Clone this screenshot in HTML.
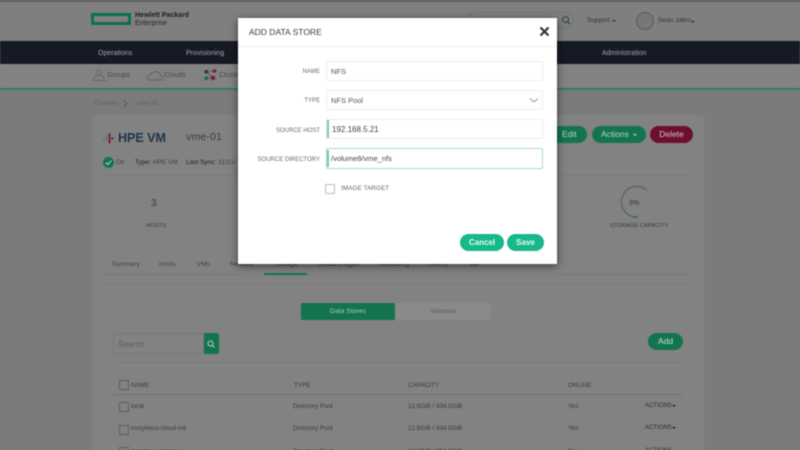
<!DOCTYPE html>
<html>
<head>
<meta charset="utf-8">
<style>
html,body{margin:0;padding:0;width:800px;height:450px;overflow:hidden;background:#7b7b7b;font-family:"Liberation Sans",sans-serif;}
.a{position:absolute;white-space:nowrap;line-height:1;}
#blur{position:absolute;left:0;top:0;width:800px;height:450px;filter:blur(.5px);overflow:hidden;}
.btn{position:absolute;border-radius:12px;color:#c9dcd3;font-size:8.5px;text-align:center;height:17px;line-height:17px;}
.cb{position:absolute;width:8px;height:8px;border:1px solid #5f5f5f;}
.t{color:#3a3a3a;font-size:6.3px;}
.lab{position:absolute;color:#6a6a6a;font-size:6px;text-align:right;width:90px;left:230px;line-height:1;}
.inp{position:absolute;left:326px;width:217px;height:20px;border:1px solid #ececec;box-sizing:border-box;border-radius:2px;background:#fff;font-size:7.5px;color:#555;line-height:19px;padding-left:4px;}
.car{position:absolute;width:0;height:0;border-left:2px solid transparent;border-right:2px solid transparent;border-top:2.5px solid #333;}
</style>
</head>
<body>
<div id="blur">
<!-- top header -->
<div style="position:absolute;left:0;top:0;width:800px;height:2px;background:#5e5e5e"></div>
<div style="position:absolute;left:0;top:2px;width:800px;height:39px;background:#7f7f7f"></div>
<div style="position:absolute;left:91px;top:13px;width:40px;height:12px;box-sizing:border-box;border:3px solid #0f6f52"></div>
<div class="a" style="left:135px;top:12px;font-size:7px;font-weight:bold;color:#1e1e1e">Hewlett Packard</div>
<div class="a" style="left:135px;top:19.500px;font-size:7px;color:#262626">Enterprise</div>
<div style="position:absolute;left:467px;top:12px;width:107px;height:17px;box-sizing:border-box;border:1px solid #5f7d70;border-radius:9px"></div>
<svg style="position:absolute;left:561px;top:15px" width="10" height="10" viewBox="0 0 10 10"><circle cx="4.500" cy="4.500" r="3" fill="none" stroke="#444" stroke-width="1.200"/><path d="M6.800 6.800L9 9" stroke="#444" stroke-width="1.300"/></svg>
<div class="a" style="left:587px;top:17.500px;font-size:6.500px;color:#333">Support</div>
<div class="car" style="left:612px;top:20px"></div>
<div style="position:absolute;left:636px;top:12px;width:16px;height:16px;border:1px solid #5a5a5a;border-radius:50%;background:#777"></div>
<div class="a" style="left:658px;top:18px;font-size:6.500px;color:#333">Sean Jabro</div>
<div class="car" style="left:691px;top:20.500px"></div>

<!-- nav -->
<div style="position:absolute;left:0;top:41px;width:800px;height:23px;background:#161a25"></div>
<div class="a" style="left:98px;top:49.500px;font-size:7px;color:#a5a5a5">Operations</div>
<div class="a" style="left:186px;top:49.500px;font-size:7px;color:#a5a5a5">Provisioning</div>
<div class="a" style="left:602px;top:49.500px;font-size:7px;color:#a5a5a5">Administration</div>

<!-- subnav -->
<div style="position:absolute;left:0;top:64px;width:800px;height:24px;background:#828282"></div>
<div style="position:absolute;left:0;top:88px;width:800px;height:2px;background:#2f7f60"></div>
<svg style="position:absolute;left:92px;top:69px" width="14" height="12" viewBox="0 0 14 12"><circle cx="7" cy="3" r="2.400" fill="none" stroke="#5f5f5f" stroke-width=".7"/><path d="M1 11.500L3 7H11L13 11.500Z" fill="none" stroke="#5f5f5f" stroke-width=".7"/></svg>
<div class="a" style="left:107px;top:72px;font-size:7px;color:#4a4a4a">Groups</div>
<svg style="position:absolute;left:146px;top:69px" width="18" height="12" viewBox="0 0 18 12"><path d="M4 11H14C17 11 17.500 7 14.500 6.500C14 3 10 1 7.500 3.500C5 3.500 4.500 5 4.500 6C.5 6.500 .5 11 4 11Z" fill="none" stroke="#555" stroke-width=".7"/></svg>
<div class="a" style="left:164px;top:72px;font-size:7px;color:#4a4a4a">Clouds</div>
<svg style="position:absolute;left:204px;top:69px" width="13" height="12" viewBox="0 0 13 12"><path d="M3 3L10 2M3 3L9 9M3 9L9 9" stroke="#444" stroke-width=".6"/><rect x="0.500" y="1" width="3.500" height="3.500" fill="#3a3a3a"/><circle cx="10.500" cy="2" r="1.800" fill="#7a1f3a"/><rect x="0.500" y="7.500" width="3.500" height="3.500" fill="#1d6a50"/><circle cx="9" cy="9" r="2.300" fill="#7a1f3a"/></svg>
<div class="a" style="left:219px;top:72px;font-size:7px;color:#4a4a4a">Clusters</div>

<!-- breadcrumb -->
<div class="a" style="left:94px;top:100.500px;font-size:6.500px;color:#5f5f5f">Clusters</div>
<svg style="position:absolute;left:122px;top:99px" width="7" height="9" viewBox="0 0 7 9"><path d="M1.500 1L5 4.500L1.500 8" fill="none" stroke="#5a5a5a" stroke-width=".9"/></svg>
<div class="a" style="left:137px;top:100.500px;font-size:6.500px;color:#4f6772">vme-01</div>

<!-- card -->
<div style="position:absolute;left:92px;top:115px;width:612px;height:340px;background:#828282;border-radius:3px"></div>
<svg style="position:absolute;left:102px;top:131px" width="14" height="14" viewBox="0 0 14 14"><rect x="1" y="7" width="1.500" height="2.500" fill="#3d7d82"/><rect x="3.500" y="4.500" width="1.500" height="5" fill="#3d7d82"/><rect x="6.500" y="2.500" width="2" height="10" fill="#7a1f3a"/><path d="M9.500 6L12.500 7.500L9.500 9Z" fill="#7a1f3a"/></svg>
<div class="a" style="left:118px;top:132px;font-size:12.500px;font-weight:bold;color:#20344a">HPE VM</div>
<div class="a" style="left:186px;top:132px;font-size:10.500px;color:#3a3a3a;letter-spacing:.2px">vme-01</div>
<div style="position:absolute;left:103px;top:157px;width:11px;height:11px;border-radius:50%;background:#14744f"></div>
<svg style="position:absolute;left:103px;top:157px" width="11" height="11" viewBox="0 0 11 11"><path d="M2.800 5.600L4.700 7.500L8.300 3.700" fill="none" stroke="#c4d6cc" stroke-width="1"/></svg>
<div class="a" style="left:116px;top:160px;font-size:6.500px;color:#444">Ok</div>
<div class="a" style="left:135px;top:160px;font-size:6.500px;color:#3f3f3f"><span style="color:#222">Type:</span> HPE VM</div>
<div class="a" style="left:186px;top:160px;font-size:6.500px;color:#3f3f3f"><span style="color:#222">Last Sync:</span> 11/21/</div>
<div style="position:absolute;left:102px;top:175px;width:590px;height:1px;background:#7a7a7a"></div>
<div class="a" style="left:151px;top:199px;font-size:10px;color:#3a3a3a">3</div>
<div class="a" style="left:146px;top:224px;font-size:5.800px;color:#3a3a3a">HOSTS</div>
<svg style="position:absolute;left:618px;top:185px" width="34" height="34" viewBox="0 0 34 34"><path d="M29 5.500A15.300 15.300 0 1 0 17 32" fill="none" stroke="#626262" stroke-width="1.300"/><path d="M15.500 32L19.500 32" stroke="#14744f" stroke-width="1.500"/></svg>
<div class="a" style="left:629px;top:200px;font-size:7px;color:#333">3%</div>
<div class="a" style="left:610px;top:224px;font-size:5.800px;color:#3a3a3a">STORAGE CAPACITY</div>
<div class="btn" style="left:540px;top:126px;width:47px;background:#14744f"></div>
<div class="a" style="left:562px;top:130px;font-size:8.500px;color:#b9d3c7">Edit</div>
<div class="btn" style="left:592px;top:126px;width:54px;background:#14744f"></div>
<div class="a" style="left:601px;top:130px;font-size:8.500px;color:#b9d3c7">Actions</div>
<div class="car" style="left:633px;top:134px;border-top-color:#b9d3c7"></div>
<div class="btn" style="left:650px;top:126px;width:43px;background:#6f0f30;color:#d3c0c7">Delete</div>

<!-- tabs -->
<div class="a" style="left:112px;top:262px;font-size:6.500px;color:#444">Summary</div>
<div class="a" style="left:159px;top:262px;font-size:6.500px;color:#444">Hosts</div>
<div class="a" style="left:197px;top:262px;font-size:6.500px;color:#444">VMs</div>
<div class="a" style="left:230px;top:262px;font-size:6.500px;color:#444">Network</div>
<div class="a" style="left:275px;top:262px;font-size:6.500px;color:#444">Storage</div>
<div class="a" style="left:318px;top:262px;font-size:6.500px;color:#444">Virtual Images</div>
<div class="a" style="left:379px;top:262px;font-size:6.500px;color:#444">Monitoring</div>
<div class="a" style="left:428px;top:262px;font-size:6.500px;color:#444">History</div>
<div class="a" style="left:470px;top:262px;font-size:6.500px;color:#444">Bill</div>
<div style="position:absolute;left:102px;top:274px;width:590px;height:1px;background:#7a7a7a"></div>
<div style="position:absolute;left:264px;top:273px;width:43px;height:2px;background:#14744f"></div>
<div style="position:absolute;left:102px;top:284px;width:590px;height:1px;background:#7c7c7c"></div>

<!-- data stores switch -->
<div style="position:absolute;left:301px;top:303px;width:94px;height:17px;background:#14744f;border-radius:1px"></div>
<div class="a" style="left:301px;top:309px;width:94px;text-align:center;font-size:6.800px;color:#a9c9ba">Data Stores</div>
<div style="position:absolute;left:395px;top:303px;width:96px;height:17px;background:#8a8a8a"></div>
<div class="a" style="left:395px;top:309px;width:96px;text-align:center;font-size:6.800px;color:#4d6168">Volumes</div>

<!-- search -->
<div style="position:absolute;left:113px;top:333px;width:91px;height:21px;box-sizing:border-box;border:1px solid #7a7a7a;border-radius:2px 0 0 2px"></div>
<div class="a" style="left:118px;top:340.500px;font-size:8px;color:#5d5d5d;letter-spacing:.2px">Search</div>
<div style="position:absolute;left:204px;top:333px;width:15px;height:21px;background:#14744f;border-radius:0 2px 2px 0"></div>
<svg style="position:absolute;left:206px;top:339px" width="10" height="10" viewBox="0 0 10 10"><circle cx="4.500" cy="4.500" r="2.500" fill="none" stroke="#bcd4c8" stroke-width="1"/><path d="M6.500 6.500L8.500 8.500" stroke="#bcd4c8" stroke-width="1"/></svg>
<div class="btn" style="left:648px;top:333px;width:35px;background:#14744f">Add</div>
<div style="position:absolute;left:113px;top:362px;width:570px;height:1px;background:#7c7c7c"></div>

<!-- table -->
<div class="cb" style="left:119px;top:380px"></div>
<div class="a t" style="left:131px;top:383px">NAME</div>
<div class="a t" style="left:294px;top:383px">TYPE</div>
<div class="a t" style="left:408px;top:383px">CAPACITY</div>
<div class="a t" style="left:568px;top:383px">ONLINE</div>
<div style="position:absolute;left:113px;top:394px;width:570px;height:1px;background:#717171"></div>

<div class="cb" style="left:119px;top:402px"></div>
<div class="a t" style="left:131px;top:404px">local</div>
<div class="a t" style="left:293px;top:404px">Directory Pool</div>
<div class="a t" style="left:408px;top:404px">12.6GiB / 934.0GiB</div>
<div class="a t" style="left:568px;top:404px">Yes</div>
<div class="a" style="left:645px;top:403px;font-size:6px;color:#2e2e2e">ACTIONS</div>
<div class="car" style="left:672px;top:405px;border-top-color:#222"></div>

<div class="cb" style="left:119px;top:425px"></div>
<div class="a t" style="left:131px;top:426px">morpheus-cloud-init</div>
<div class="a t" style="left:293px;top:426px">Directory Pool</div>
<div class="a t" style="left:408px;top:426px">12.6GiB / 934.0GiB</div>
<div class="a t" style="left:568px;top:426px">Yes</div>
<div class="a" style="left:645px;top:425px;font-size:6px;color:#2e2e2e">ACTIONS</div>
<div class="car" style="left:672px;top:427px;border-top-color:#222"></div>

<div class="cb" style="left:119px;top:447px"></div>
<div class="a t" style="left:131px;top:449px">morpheus-images</div>
<div class="a t" style="left:293px;top:449px">Directory Pool</div>
<div class="a t" style="left:408px;top:449px">12.6GiB / 934.0GiB</div>
<div class="a t" style="left:568px;top:449px">Yes</div>
<div class="a" style="left:645px;top:448px;font-size:6px;color:#2e2e2e">ACTIONS</div>

<!-- modal -->
<div style="position:absolute;left:238px;top:18px;width:319px;height:246px;background:#fff;box-shadow:0 2px 8px rgba(0,0,0,.55)"></div>
<div style="position:absolute;left:238px;top:46px;width:319px;height:1px;background:#eeeeee"></div>
<div class="a" style="left:249px;top:28px;font-size:8.500px;color:#3a3a3a">ADD DATA STORE</div>
<svg style="position:absolute;left:539px;top:26px" width="11" height="11" viewBox="0 0 11 11"><path d="M1.500 1.500L9.500 9.500M9.500 1.500L1.500 9.500" stroke="#333" stroke-width="2.200"/></svg>

<div class="lab" style="top:69px">NAME</div>
<div class="inp" style="top:61px">NFS</div>
<div class="lab" style="top:98px">TYPE</div>
<div class="inp" style="top:90px">NFS Pool</div>
<svg style="position:absolute;left:529px;top:97px" width="10" height="7" viewBox="0 0 10 7"><path d="M1 1.500L5 5L9 1.500" fill="none" stroke="#777" stroke-width=".8"/></svg>
<div class="lab" style="top:128px">SOURCE HOST</div>
<div class="inp" style="top:119px;padding-left:5px;font-size:8px;color:#444">192.168.5.21</div>
<div style="position:absolute;left:327px;top:120px;width:2px;height:18px;background:#7cc8b4"></div>
<div class="lab" style="top:157px">SOURCE DIRECTORY</div>
<div class="inp" style="top:148px;height:21px;border:1px solid #a5dccd;padding-left:4px;font-size:7.500px;color:#444;line-height:20px">/volume8/vme_nfs</div>
<div style="position:absolute;left:327px;top:150px;width:2px;height:17px;background:#7cc8b4"></div>
<div style="position:absolute;left:325px;top:184px;width:8px;height:8px;border:1px solid #bdbdbd;border-radius:1px"></div>
<div class="a" style="left:341px;top:186px;font-size:6.300px;color:#666;letter-spacing:.1px">IMAGE TARGET</div>

<div class="btn" style="left:460px;top:234px;width:44px;background:#17b889;color:#e9f9f3;font-weight:bold;font-size:8px">Cancel</div>
<div class="btn" style="left:507px;top:234px;width:37px;background:#17b889;color:#e9f9f3;font-weight:bold;font-size:8px">Save</div>
</div>
</body>
</html>
